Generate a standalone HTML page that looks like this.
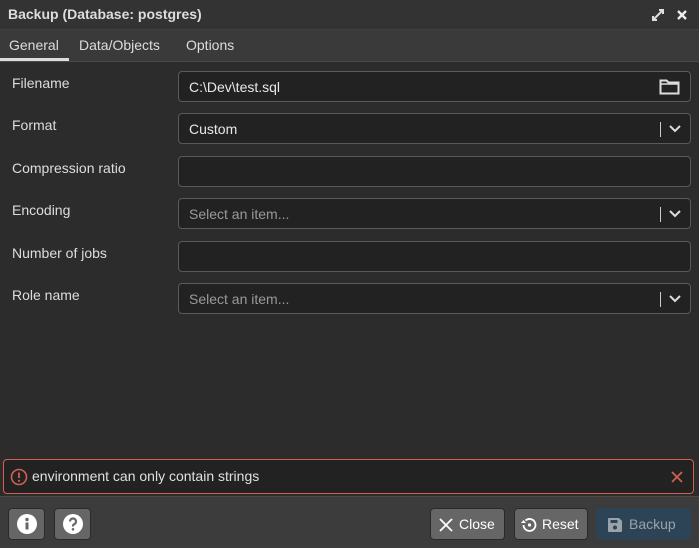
<!DOCTYPE html>
<html><head><style>
*{box-sizing:border-box;margin:0;padding:0}
body{width:699px;height:548px;background:#2c2c2c;font-family:"Liberation Sans",sans-serif;color:#e0e0e0;position:relative;overflow:hidden;font-size:14px}
.title{position:absolute;left:0;top:0;width:699px;height:30px;background:#333;border-bottom:1px solid #404040}
.title span{position:absolute;left:8px;top:6px;font-weight:bold;font-size:14px;color:#ddd}
.tabs{position:absolute;left:0;top:30px;width:699px;height:32px;background:#3a3a3a;border-bottom:1px solid #4a4a4a}
.tab{position:absolute;top:7px;font-size:14px;color:#ddd}
.ul{position:absolute;left:0;top:28px;width:69px;height:3px;background:#ddd}
.lbl{position:absolute;left:12px;font-size:14px;color:#ddd}
.in{position:absolute;left:178px;width:513px;height:31px;background:#222;border:1px solid #5a5a5a;border-radius:4px}
.in span{position:absolute;left:10px;top:7px;font-size:14px;color:#e8e8e8}
.in span.ph{color:#999}
.sep{position:absolute;right:29px;top:8px;width:1px;height:15px;background:#ccc}
.chev{position:absolute;right:8px;top:9px}
.err{position:absolute;left:3px;top:459px;width:691px;height:35px;background:#222;border:1px solid #d0604f;border-radius:4px}
.err span{position:absolute;left:28px;top:8px;color:#e0e0e0}
.foot{position:absolute;left:0;top:496px;width:699px;height:52px;background:#3c3c3c;border-top:1px solid #4a4a4a}
.b{position:absolute;top:508px;height:32px;border:1px solid #2a2a2a;border-radius:4px;background:#666;color:#fff;font-size:14px}
.b span{position:absolute;top:7px}
</style></head><body>
<div class="title"><span>Backup (Database: postgres)</span>
<svg style="position:absolute;left:651px;top:8px" width="14" height="14" viewBox="0 0 14 14"><path d="M2 12L12 2M8 2h4v4M2 8v4h4" stroke="#ddd" stroke-width="2" fill="none"/></svg>
<svg style="position:absolute;left:676px;top:9px" width="12" height="12" viewBox="0 0 12 12"><path d="M2 2L10 10M10 2L2 10" stroke="#eee" stroke-width="2.4"/></svg>
</div>
<div class="tabs"><div class="tab" style="left:9px">General</div><div class="tab" style="left:79px">Data/Objects</div><div class="tab" style="left:186px">Options</div><div class="ul"></div></div>

<div class="lbl" style="top:75px">Filename</div>
<div class="in" style="top:71px"><span>C:\Dev\test.sql</span>
<svg style="position:absolute;right:10px;top:6px" width="21" height="18" viewBox="0 0 21 18"><path d="M1.5 2.5h6l2 2h10v11h-18z" stroke="#ddd" stroke-width="2" fill="none"/><path d="M1.5 6h18" stroke="#ddd" stroke-width="1.5"/></svg></div>

<div class="lbl" style="top:117px">Format</div>
<div class="in" style="top:113px"><span>Custom</span><div class="sep"></div><svg class="chev" width="14" height="12" viewBox="0 0 14 12"><path d="M2 3l5 5 5-5" stroke="#ddd" stroke-width="2" fill="none"/></svg></div>

<div class="lbl" style="top:160px">Compression ratio</div>
<div class="in" style="top:156px"></div>

<div class="lbl" style="top:202px">Encoding</div>
<div class="in" style="top:198px"><span class="ph">Select an item...</span><div class="sep"></div><svg class="chev" width="14" height="12" viewBox="0 0 14 12"><path d="M2 3l5 5 5-5" stroke="#ddd" stroke-width="2" fill="none"/></svg></div>

<div class="lbl" style="top:245px">Number of jobs</div>
<div class="in" style="top:241px"></div>

<div class="lbl" style="top:287px">Role name</div>
<div class="in" style="top:283px"><span class="ph">Select an item...</span><div class="sep"></div><svg class="chev" width="14" height="12" viewBox="0 0 14 12"><path d="M2 3l5 5 5-5" stroke="#ddd" stroke-width="2" fill="none"/></svg></div>

<div class="err">
<svg style="position:absolute;left:6px;top:8px" width="18" height="18" viewBox="0 0 18 18"><circle cx="9" cy="9" r="7.5" stroke="#d0604f" stroke-width="1.6" fill="none"/><path d="M9 4.5v5.5" stroke="#d0604f" stroke-width="1.8"/><circle cx="9" cy="12.8" r="1.1" fill="#d0604f"/></svg>
<span>environment can only contain strings</span>
<svg style="position:absolute;right:10px;top:11px" width="12" height="12" viewBox="0 0 12 12"><path d="M1 1L11 11M11 1L1 11" stroke="#d0604f" stroke-width="1.8"/></svg>
</div>
<div class="foot"></div>
<div class="b" style="left:8px;width:37px"><svg style="position:absolute;left:8px;top:5px" width="20" height="20" viewBox="0 0 20 20"><circle cx="10" cy="10" r="10" fill="#fff"/><rect x="8.5" y="8.5" width="3" height="7" fill="#666"/><circle cx="10" cy="5.5" r="1.7" fill="#666"/></svg></div>
<div class="b" style="left:54px;width:37px"><svg style="position:absolute;left:8px;top:5px" width="20" height="20" viewBox="0 0 20 20"><circle cx="10" cy="10" r="10" fill="#fff"/><path d="M7 7.5a3 3 0 1 1 4 2.8c-1 .4-1 1-1 2.2" stroke="#666" stroke-width="2.2" fill="none"/><circle cx="10" cy="15.3" r="1.3" fill="#666"/></svg></div>
<div class="b" style="left:430px;width:75px"><svg style="position:absolute;left:8px;top:9px" width="14" height="14" viewBox="0 0 14 14"><path d="M1 1L13 13M13 1L1 13" stroke="#fff" stroke-width="1.8"/></svg><span style="left:28px">Close</span></div>
<div class="b" style="left:514px;width:74px"><svg style="position:absolute;left:5px;top:7px" width="18" height="18" viewBox="0 0 18 18"><path d="M3.5 9a6 6 0 1 0 2-4.5" stroke="#fff" stroke-width="1.8" fill="none"/><path d="M1 7h5l-2.5-3z" fill="#fff"/><circle cx="9.5" cy="9" r="1.6" fill="#fff"/></svg><span style="left:27px">Reset</span></div>
<div class="b" style="left:596px;width:95px;background:#2d4356;border-color:#2d4356;color:#9aa3ab"><svg style="position:absolute;left:10px;top:8px" width="16" height="16" viewBox="0 0 16 16"><path d="M1 2a1 1 0 0 1 1-1h10l3 3v10a1 1 0 0 1-1 1H2a1 1 0 0 1-1-1z" fill="#9aa3ab"/><rect x="3.5" y="3" width="7" height="3" fill="#2d4356"/><circle cx="8" cy="10.5" r="2" fill="#2d4356"/></svg><span style="left:32px">Backup</span></div>
</body></html>
